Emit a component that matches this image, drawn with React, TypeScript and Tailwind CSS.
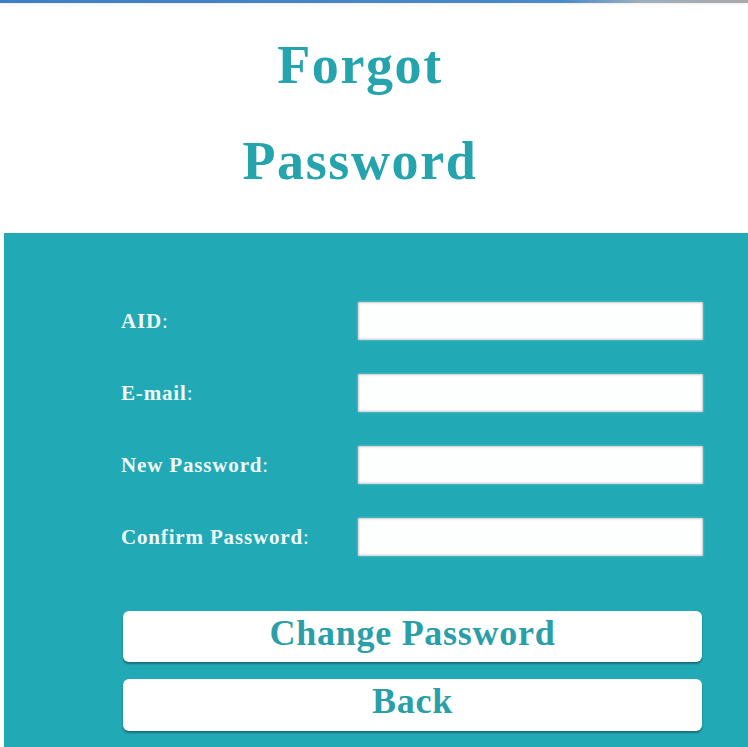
import React from "react";

const serif = { fontFamily: '"Liberation Serif", "Times New Roman", serif' };

function Row({ label }: { label: string }) {
  return (
    <div className="flex items-center h-[38px]">
      <div className="w-[237px] text-[21px] font-bold tracking-[0.04em] text-[#eef9f8] leading-none">
        {label}
        <span className="font-normal">:</span>
      </div>
      <div className="w-[345px] h-[38px] bg-[#fdfefe] shadow-[inset_0_0_3px_rgba(0,0,0,0.4),0_0_2px_rgba(255,255,255,0.5)]" />
    </div>
  );
}

export default function App() {
  return (
    <div className="w-[748px] h-[747px] bg-white flex flex-col overflow-hidden" style={serif}>
      <div className="h-[3px] w-full bg-[linear-gradient(to_right,#3d7fc6_0%,#4a8ac8_75%,#9fb0bd_86%,#a8a8a8_100%)] shadow-[0_1px_3px_rgba(0,0,0,0.08)]" />
      <div className="mt-[14px] pr-[28px] flex flex-col items-center text-[54px] font-bold leading-[96px] tracking-[0.03em] text-[#25a4ae]">
        <div>Forgot</div>
        <div>Password</div>
      </div>
      <div className="mt-[24px] ml-[4px] flex-1 bg-[#21a9b6] pl-[117px] pt-[69px] flex flex-col">
        <div className="flex flex-col gap-[34px]">
          <Row label="AID" />
          <Row label="E-mail" />
          <Row label="New Password" />
          <Row label="Confirm Password" />
        </div>
        <div className="mt-[55px] ml-[2px] w-[579px] flex flex-col gap-[17px]">
          <button className="h-[51px] pb-[8px] rounded-[6px] bg-white shadow-[0_2px_2px_rgba(0,0,0,0.35)] text-[36px] font-bold tracking-[0.02em] text-[#2a9fa9] leading-none">
            Change Password
          </button>
          <button className="h-[52px] pb-[8px] rounded-[6px] bg-white shadow-[0_2px_2px_rgba(0,0,0,0.35)] text-[36px] font-bold tracking-[0.02em] text-[#2a9fa9] leading-none">
            Back
          </button>
        </div>
      </div>
    </div>
  );
}
